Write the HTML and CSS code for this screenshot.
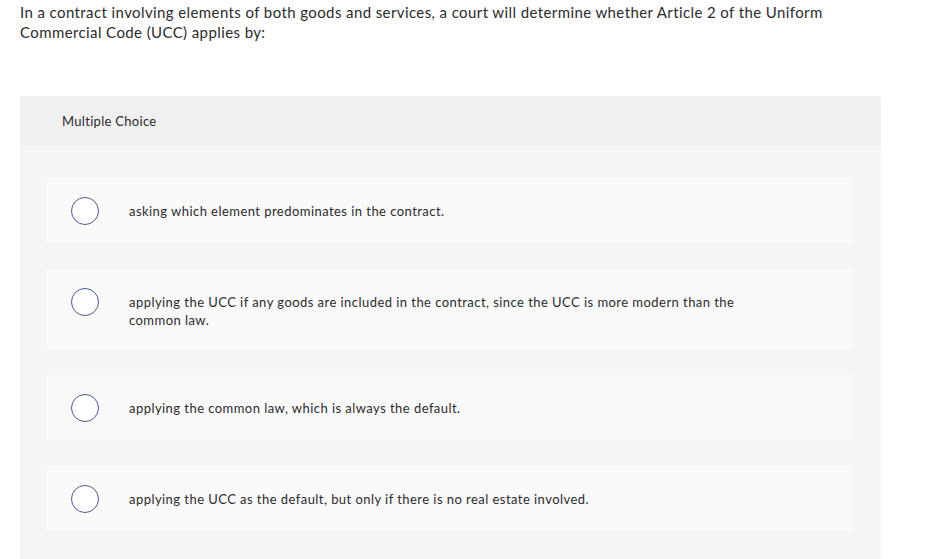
FILE: index.html
```html
<!DOCTYPE html>
<html>
<head>
<meta charset="utf-8">
<link rel="stylesheet" href="styles.css">
</head>
<body>
<div class="page">
  <p class="question">In a contract involving elements of both goods and services, a court will determine whether Article 2 of the Uniform Commercial Code (UCC) applies by:</p>
  <section class="panel">
    <header class="panel-head">Multiple Choice</header>
    <div class="panel-body">
      <div class="option">
        <span class="radio"></span>
        <span class="opt-text">asking which element predominates in the contract.</span>
      </div>
      <div class="option">
        <span class="radio"></span>
        <span class="opt-text">applying the UCC if any goods are included in the contract, since the UCC is more modern than the common law.</span>
      </div>
      <div class="option">
        <span class="radio"></span>
        <span class="opt-text">applying the common law, which is always the default.</span>
      </div>
      <div class="option">
        <span class="radio"></span>
        <span class="opt-text">applying the UCC as the default, but only if there is no real estate involved.</span>
      </div>
    </div>
  </section>
</div>
</body>
</html>
```

FILE: styles.css
```css
html, body {
  margin: 0;
  padding: 0;
  background: #ffffff;
}
body {
  font-family: "Lato", "Liberation Sans", sans-serif;
  color: #2b2b2b;
}
.page {
  padding: 2px 47px 0 20px;
}
.question {
  margin: 0;
  font-size: 15px;
  line-height: 20px;
  letter-spacing: 0.4px;
  width: 840px;
}
.panel {
  margin-top: 54px;
  width: 861px;
  background: #f5f5f5;
  border-radius: 3px 3px 0 0;
  height: 470px;
}
.panel-head {
  height: 50px;
  background: #f0f0f0;
  border-radius: 3px 3px 0 0;
  padding-left: 42px;
  font-size: 13px;
  line-height: 50px;
  letter-spacing: 0.3px;
}
.panel-body {
  padding: 32px 28px 0 26px;
  display: flex;
  flex-direction: column;
  gap: 26px;
}
.option {
  display: flex;
  align-items: flex-start;
  background: #fafafa;
  border-radius: 3px;
  padding: 19px 0 18px 25px;
}
.radio {
  flex: none;
  box-sizing: border-box;
  width: 28px;
  height: 28px;
  border: 1.5px solid #4a5794;
  border-radius: 50%;
  background: #ffffff;
}
.opt-text {
  margin: 5px 110px 2px 30px;
  font-size: 13px;
  line-height: 18px;
  letter-spacing: 0.45px;
}
```
